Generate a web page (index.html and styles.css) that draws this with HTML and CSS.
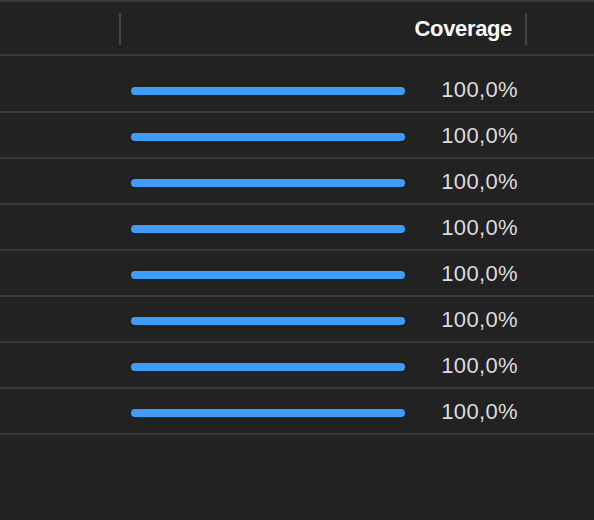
FILE: index.html
```html
<!DOCTYPE html>
<html>
<head>
<meta charset="utf-8">
<link rel="stylesheet" href="styles.css">
</head>
<body>
<div class="table">
  <div class="header">
    <div class="hcell first"></div>
    <div class="hsep"></div>
    <div class="hcell coverage">Coverage</div>
    <div class="hsep"></div>
  </div>
  <div class="body">
    <div class="row"><div class="bar"></div><div class="pct">100,0%</div></div>
    <div class="row"><div class="bar"></div><div class="pct">100,0%</div></div>
    <div class="row"><div class="bar"></div><div class="pct">100,0%</div></div>
    <div class="row"><div class="bar"></div><div class="pct">100,0%</div></div>
    <div class="row"><div class="bar"></div><div class="pct">100,0%</div></div>
    <div class="row"><div class="bar"></div><div class="pct">100,0%</div></div>
    <div class="row"><div class="bar"></div><div class="pct">100,0%</div></div>
    <div class="row"><div class="bar"></div><div class="pct">100,0%</div></div>
  </div>
</div>
</body>
</html>
```
FILE: styles.css
```css
html, body {
  margin: 0;
  padding: 0;
  background: #222222;
  width: 594px;
  height: 520px;
  overflow: hidden;
  font-family: "Liberation Sans", Arial, sans-serif;
}

.table {
  display: flex;
  flex-direction: column;
}

.header {
  display: flex;
  align-items: center;
  padding-top: 2px;
  box-sizing: border-box;
  height: 56px;
  border-top: 2px solid #393939;
  border-bottom: 2px solid #393939;
}

.hcell.first {
  width: 119px;
}

.hsep {
  width: 2px;
  height: 32px;
  background: #444444;
}

.hcell.coverage {
  width: 404px;
  box-sizing: border-box;
  padding-right: 13px;
  text-align: right;
  color: #ffffff;
  font-size: 22px;
  font-weight: 700;
  letter-spacing: -0.35px;
}

.body {
  padding-top: 11px;
  display: flex;
  flex-direction: column;
}

.row {
  display: flex;
  align-items: center;
  height: 46px;
  box-sizing: border-box;
  border-bottom: 2px solid #393939;
}

.bar {
  margin-left: 131px;
  margin-top: 4px;
  width: 274px;
  height: 8px;
  border-radius: 4px;
  background: #409cfb;
}

.pct {
  width: 113px;
  padding-top: 2px;
  text-align: right;
  color: #dcdcdc;
  font-size: 22px;
  letter-spacing: 0.35px;
}
```
